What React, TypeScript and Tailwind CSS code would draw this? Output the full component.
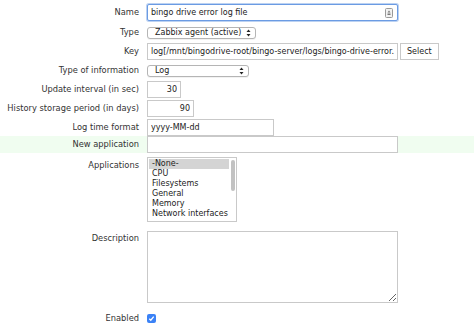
import React from "react"

const font = { fontFamily: '"DejaVu Sans", Verdana, sans-serif' }

function Label({ children, top }: { children: React.ReactNode; top?: boolean }) {
  return (
    <div className={`w-[139px] shrink-0 text-right text-[8.3px] text-[#333] ${top ? "self-start" : ""}`}>
      {children}
    </div>
  )
}

function Arrows() {
  return (
    <svg width="5" height="8" viewBox="0 0 5 8" className="shrink-0">
      <path d="M2.5 0.5 L4.5 3 L0.5 3 Z" fill="#222" />
      <path d="M2.5 7.5 L4.5 5 L0.5 5 Z" fill="#222" />
    </svg>
  )
}

function FakeSelect({ value, width }: { value: string; width: string }) {
  return (
    <div
      className={`${width} h-[12px] flex items-center justify-between rounded-[3px] border border-[#b5b5b5] bg-white pl-[7px] pr-[4px] text-[8px] text-[#222] shadow-[0_1px_0_rgba(0,0,0,0.05)]`}
    >
      <span>{value}</span>
      <Arrows />
    </div>
  )
}

const inputCls =
  "h-[17px] border border-[#c9c9c9] bg-white px-[3px] text-[8px] text-[#222] outline-none"

const apps = ["-None-", "CPU", "Filesystems", "General", "Memory", "Network interfaces"]

export default function App() {
  return (
    <main className="w-[474px] h-[331px] bg-white overflow-hidden pt-[4px]" style={font}>
      <div className="flex items-center gap-[8px] h-[17px]">
        <Label>Name</Label>
        <div className="w-[251px] h-[17px] flex items-center border border-[#6b9be3] rounded-[2px] shadow-[0_0_0_1px_rgba(107,155,227,0.45)] bg-white px-[3px] text-[8px] text-[#222]">
          <span className="flex-1">bingo drive error log file</span>
          <svg width="8" height="10" viewBox="0 0 8 10" className="shrink-0 mr-[1px]">
            <rect x="0.5" y="0.5" width="7" height="9" rx="1" fill="#f2f2f2" stroke="#9a9a9a" />
            <path d="M4 2.5 L5.5 4.5 L2.5 4.5 Z" fill="#777" />
            <rect x="2.5" y="5.5" width="3" height="1.5" fill="#777" />
          </svg>
        </div>
      </div>

      <div className="flex items-center gap-[8px] h-[17px] mt-[3px]">
        <Label>Type</Label>
        <FakeSelect value="Zabbix agent (active)" width="w-[109px]" />
      </div>

      <div className="flex items-center gap-[8px] h-[17px] mt-[2px]">
        <Label>Key</Label>
        <input
          readOnly
          className={`${inputCls} w-[251px]`}
          value="log[/mnt/bingodrive-root/bingo-server/logs/bingo-drive-error.log]"
        />
        <button className="h-[17px] ml-[-6px] px-[6px] border border-[#c9c9c9] bg-white text-[8px] text-[#222]">
          Select
        </button>
      </div>

      <div className="flex items-center gap-[8px] h-[17px] mt-[2px]">
        <Label>Type of information</Label>
        <FakeSelect value="Log" width="w-[102px]" />
      </div>

      <div className="flex items-center gap-[8px] h-[17px] mt-[2px]">
        <Label>Update interval (in sec)</Label>
        <input readOnly className={`${inputCls} w-[34px] text-right`} value="30" />
      </div>

      <div className="flex items-center gap-[8px] h-[16px] mt-[2px]">
        <Label>History storage period (in days)</Label>
        <input readOnly className={`${inputCls} h-[16px] w-[47px] text-right`} value="90" />
      </div>

      <div className="flex items-center gap-[8px] h-[17px] mt-[3px]">
        <Label>Log time format</Label>
        <input readOnly className={`${inputCls} w-[127px]`} value="yyyy-MM-dd" />
      </div>

      <div className="flex items-center gap-[8px] h-[17px] bg-[#f0fdf0]">
        <Label>New application</Label>
        <input readOnly className={`${inputCls} h-[16px] w-[251px]`} value="" />
      </div>

      <div className="flex gap-[8px] mt-[4px]">
        <Label top>
          <div className="pt-[2px]">Applications</div>
        </Label>
        <div className="w-[90px] h-[65px] border border-[#c9c9c9] bg-white flex py-[1px] pl-[1px]">
          <div className="flex-1 flex flex-col text-[8px] text-[#222] leading-[10px]">
            {apps.map((a, i) => (
              <div key={a} className={`pl-[3px] h-[10px] ${i === 0 ? "bg-[#d4d4d4]" : ""}`}>
                {a}
              </div>
            ))}
          </div>
          <div className="w-[7px] flex justify-center pt-[1px]">
            <div className="w-[4px] h-[31px] rounded-full bg-[#c2c2c2]" />
          </div>
        </div>
      </div>

      <div className="flex gap-[8px] mt-[9px]">
        <Label top>
          <div className="pt-[1px]">Description</div>
        </Label>
        <textarea readOnly className="w-[251px] h-[72px] border border-[#c9c9c9] bg-white outline-none" />
      </div>

      <div className="flex items-center gap-[8px] mt-[9px]">
        <Label>Enabled</Label>
        <div className="w-[9px] h-[9px] rounded-[2px] bg-[#3b82f6] flex items-center justify-center">
          <svg width="7" height="7" viewBox="0 0 7 7">
            <path d="M1.3 3.7 L2.8 5.2 L5.7 1.6" fill="none" stroke="white" strokeWidth="1.3" />
          </svg>
        </div>
      </div>
    </main>
  )
}
